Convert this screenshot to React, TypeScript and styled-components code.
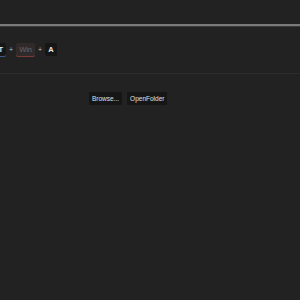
import styled, { createGlobalStyle } from 'styled-components';

const Global = createGlobalStyle`
    html, body {
        margin: 0;
        padding: 0;
        background: #222222;
    }
    body {
        font-family: 'Liberation Sans', Arial, sans-serif;
        color: #dddddd;
    }
`;

const Page = styled.div`
    width: 300px;
    height: 300px;
    background: #222222;
    display: flex;
    flex-direction: column;
    overflow: hidden;
`;

const TopBar = styled.div`
    height: 24px;
    border-bottom: 2px solid #7a7a7a;
    box-shadow: 0 1px 0 #3a3a3a;
`;

const ShortcutRow = styled.div`
    display: flex;
    align-items: center;
    gap: 3px;
    height: 47px;
    margin-left: -14px;
    border-bottom: 1px solid #2c2c2c;
`;

const Key = styled.span<{ $line?: string; $dim?: boolean }>`
    display: inline-flex;
    align-items: center;
    justify-content: center;
    min-width: 3px;
    height: 13px;
    padding: 0 3px;
    font-size: 7.5px;
    font-weight: ${(p) => (p.$dim ? 'normal' : 'bold')};
    border-radius: 2px;
    background: ${(p) => (p.$dim ? '#302a2a' : '#161616')};
    color: ${(p) => (p.$dim ? '#6e6464' : '#e8e8e8')};
    box-shadow: ${(p) => (p.$line ? `0 1px 0 ${p.$line}` : 'none')};
`;

const Plus = styled.span`
    font-size: 7px;
    color: #bbbbbb;
`;

const ActionRow = styled.div`
    display: flex;
    gap: 5px;
    padding: 18px 0 0 89px;
`;

const Button = styled.button`
    height: 13px;
    padding: 0 3px;
    border: none;
    border-radius: 1px;
    background: #161616;
    color: #e0e0e0;
    font-family: 'Liberation Sans', Arial, sans-serif;
    font-size: 6.5px;
    line-height: 13px;
`;

export default function App() {
    return (
        <Page>
            <Global />
            <TopBar />
            <ShortcutRow>
                <Key $line="#3b5a8a">ALT</Key>
                <Plus>+</Plus>
                <Key $line="#7a3a3a" $dim>
                    Win
                </Key>
                <Plus>+</Plus>
                <Key>A</Key>
            </ShortcutRow>
            <ActionRow>
                <Button>Browse...</Button>
                <Button>OpenFolder</Button>
            </ActionRow>
        </Page>
    );
}
